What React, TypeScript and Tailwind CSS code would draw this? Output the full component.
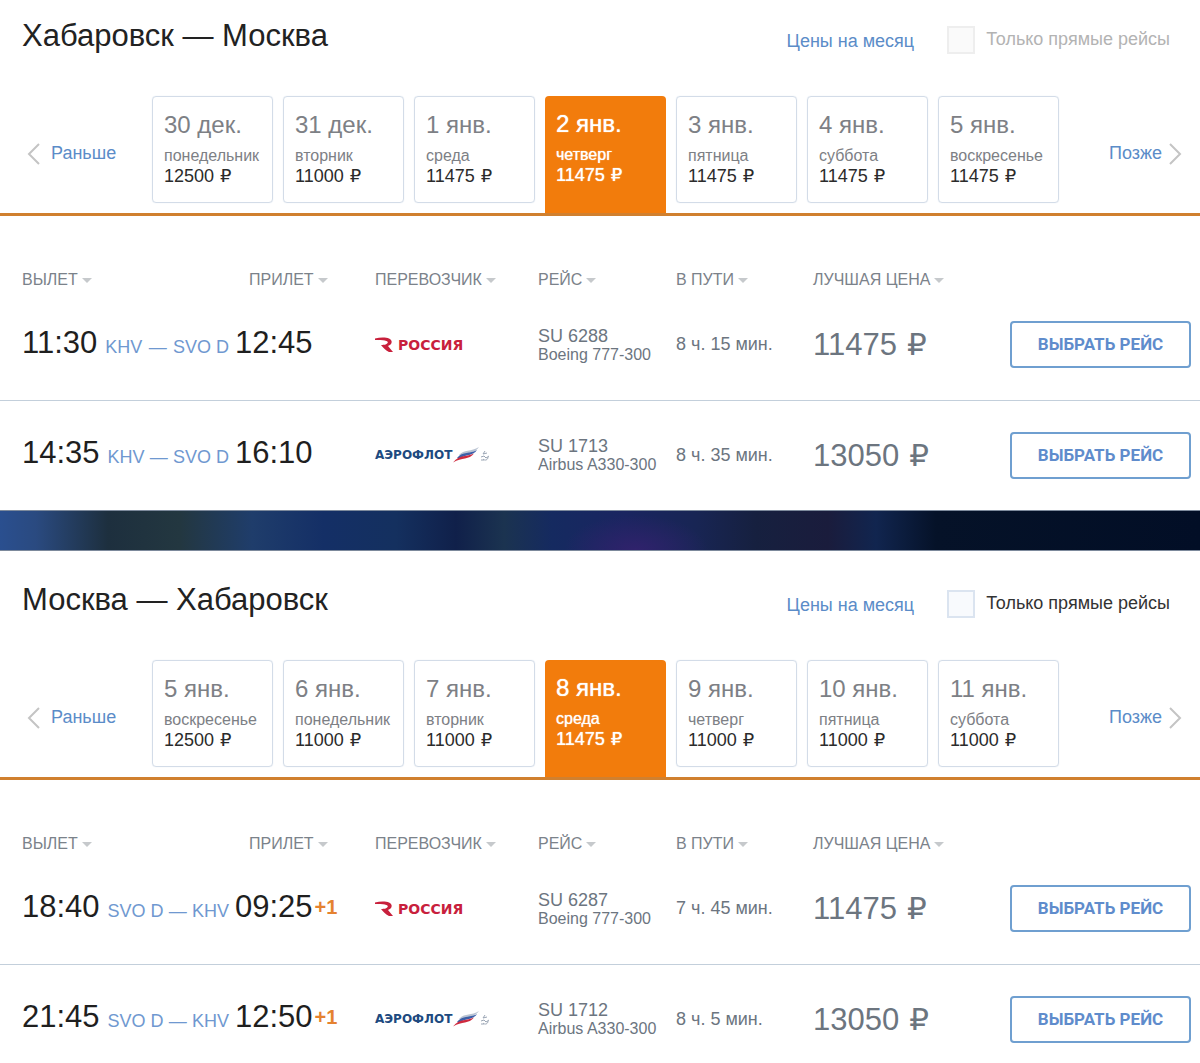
import { useState } from 'react';

type Carrier = 'rossiya' | 'aeroflot';

interface DayPrice {
  date: string;
  weekday: string;
  price: number;
}

interface Flight {
  depart: string;
  from: string;
  to: string;
  arrive: string;
  nextDay?: boolean;
  carrier: Carrier;
  number: string;
  plane: string;
  duration: string;
  price: number;
}

interface Direction {
  id: string;
  title: string;
  directOnlyDisabled?: boolean;
  days: DayPrice[];
  flights: Flight[];
}

const OUTBOUND: Direction = {
  id: 'outbound',
  title: 'Хабаровск — Москва',
  directOnlyDisabled: true,
  days: [
    { date: '30 дек.', weekday: 'понедельник', price: 12500 },
    { date: '31 дек.', weekday: 'вторник', price: 11000 },
    { date: '1 янв.', weekday: 'среда', price: 11475 },
    { date: '2 янв.', weekday: 'четверг', price: 11475 },
    { date: '3 янв.', weekday: 'пятница', price: 11475 },
    { date: '4 янв.', weekday: 'суббота', price: 11475 },
    { date: '5 янв.', weekday: 'воскресенье', price: 11475 },
  ],
  flights: [
    { depart: '11:30', from: 'KHV', to: 'SVO D', arrive: '12:45', carrier: 'rossiya', number: 'SU 6288', plane: 'Boeing 777-300', duration: '8 ч. 15 мин.', price: 11475 },
    { depart: '14:35', from: 'KHV', to: 'SVO D', arrive: '16:10', carrier: 'aeroflot', number: 'SU 1713', plane: 'Airbus A330-300', duration: '8 ч. 35 мин.', price: 13050 },
  ],
};

const INBOUND: Direction = {
  id: 'inbound',
  title: 'Москва — Хабаровск',
  days: [
    { date: '5 янв.', weekday: 'воскресенье', price: 12500 },
    { date: '6 янв.', weekday: 'понедельник', price: 11000 },
    { date: '7 янв.', weekday: 'вторник', price: 11000 },
    { date: '8 янв.', weekday: 'среда', price: 11475 },
    { date: '9 янв.', weekday: 'четверг', price: 11000 },
    { date: '10 янв.', weekday: 'пятница', price: 11000 },
    { date: '11 янв.', weekday: 'суббота', price: 11000 },
  ],
  flights: [
    { depart: '18:40', from: 'SVO D', to: 'KHV', arrive: '09:25', nextDay: true, carrier: 'rossiya', number: 'SU 6287', plane: 'Boeing 777-300', duration: '7 ч. 45 мин.', price: 11475 },
    { depart: '21:45', from: 'SVO D', to: 'KHV', arrive: '12:50', nextDay: true, carrier: 'aeroflot', number: 'SU 1712', plane: 'Airbus A330-300', duration: '8 ч. 5 мин.', price: 13050 },
  ],
};

const COLUMNS = [
  { label: 'ВЫЛЕТ', cell: 'w-[235px] pl-[22px]' },
  { label: 'ПРИЛЕТ', cell: 'w-[140px] pl-[14px]' },
  { label: 'ПЕРЕВОЗЧИК', cell: 'w-[163px]' },
  { label: 'РЕЙС', cell: 'w-[138px]' },
  { label: 'В ПУТИ', cell: 'w-[137px]' },
  { label: 'ЛУЧШАЯ ЦЕНА', cell: '' },
];

function RossiyaLogo() {
  return (
    <span className="flex items-center gap-1 text-[#c8203c]">
      <svg width="19" height="16" viewBox="0 0 19 16" fill="currentColor" aria-hidden="true">
        <path d="M0 1.500C5 .3 11 .3 14 1.500C18 3.200 17.500 7.500 13 9L18 15H14C11 13.500 8 10.500 6 8C9.500 8 12.500 7.200 12.800 5.500C13 3.500 9 2.900 0 2.900Z" />
      </svg>
      <span className="font-['DejaVu_Sans',sans-serif] text-[14px] leading-4 font-bold">РОССИЯ</span>
    </span>
  );
}

function AeroflotLogo() {
  return (
    <span className="flex items-center gap-px text-[#1d4a80]">
      <span className="font-['DejaVu_Sans',sans-serif] text-[12px] leading-4 font-bold">АЭРОФЛОТ</span>
      <svg width="38" height="18" viewBox="0 0 38 18" fill="none" aria-hidden="true">
        <path d="M6 9C11 3 18 6 26 1C22 7 15 6 8 10Z" fill="#b9c3d2" />
        <path d="M4 12C10 5 17 8 24 4C20 10 13 8 6 13Z" fill="#3c5fa8" />
        <path d="M0 16.500C7 8 14 11 21 7.500C16 14 9 11 0 16.500Z" fill="#cf2a3e" />
        <g stroke="#9aa5b4" strokeWidth="1">
          <path d="M32 5L30 8L34 7M28 11L31 10L33 12L36 10M30 13C32 15 35 14 35 11M28 14H31" />
        </g>
      </svg>
    </span>
  );
}

function Price({ value, className }: { value: number; className: string }) {
  return (
    <span className={`flex items-baseline whitespace-nowrap ${className}`}>
      {value}
      <span className="font-['DejaVu_Sans',sans-serif]">₽</span>
    </span>
  );
}

function DayTabs({ days }: { days: DayPrice[] }) {
  const [selected, setSelected] = useState(3);

  return (
    <div className="flex border-b-3 border-[#d0802f]">
      <button type="button" className="flex h-[107px] w-[152px] shrink-0 items-center gap-[10px] pt-2 pl-[27px] text-[18px] text-[#5b8cc8]">
        <svg width="14" height="22" viewBox="0 0 14 22" fill="none" stroke="#c4c4c4" strokeWidth="2" aria-hidden="true">
          <path d="M12 1L2 11L12 21" />
        </svg>
        Раньше
      </button>

      <div className="grid min-w-0 flex-1 grid-cols-7 gap-[10px]">
        {days.map((day, i) => (
          <button
            key={day.date}
            type="button"
            aria-pressed={i === selected}
            onClick={() => setSelected(i)}
            className={`flex min-w-0 flex-col overflow-hidden text-left ${
              i === selected
                ? 'rounded-t-sm bg-[#f27c0c] pt-[14px] pl-[11px] text-white text-shadow-[0_0_1px_#ffffff]'
                : 'mb-[10px] h-[107px] rounded-sm border border-[#d3dce8] pt-[14px] pl-[11px] text-[#7d8085] shadow-[0_0_1px_#d3dce8]'
            }`}
          >
            <span className="text-[24px] leading-[28px]">{day.date}</span>
            <span className="mt-[7px] text-[16px] leading-5 whitespace-nowrap">{day.weekday}</span>
            <Price value={day.price} className={`gap-[6px] text-[18px] leading-5 ${i === selected ? '' : 'text-[#2b2b2b]'}`} />
          </button>
        ))}
      </div>

      <button type="button" className="flex h-[107px] w-[141px] shrink-0 items-center justify-end gap-[6px] pt-2 pr-[18px] text-[18px] text-[#5b8cc8]">
        Позже
        <svg width="14" height="22" viewBox="0 0 14 22" fill="none" stroke="#c4c4c4" strokeWidth="2" aria-hidden="true">
          <path d="M2 1L12 11L2 21" />
        </svg>
      </button>
    </div>
  );
}

function FlightRow({ flight, last }: { flight: Flight; last: boolean }) {
  return (
    <tr className={`h-[110px] text-[#6c757f] ${last ? '' : 'border-b border-[#c3cfdb]'}`}>
      <td className="pb-1 pl-[22px]">
        <div className="flex items-baseline gap-2 pr-[6px]">
          <span className="text-[31px] leading-9 text-[#1f1f1f]">{flight.depart}</span>
          <a href="#route" className="flex flex-1 justify-between text-[18px] whitespace-nowrap text-[#6f98d0]">
            <span>{flight.from}</span>
            <span>—</span>
            <span>{flight.to}</span>
          </a>
        </div>
      </td>
      <td className="pb-1">
        <div className="flex gap-[2px] whitespace-nowrap">
          <span className="text-[31px] leading-9 text-[#1f1f1f]">{flight.arrive}</span>
          {flight.nextDay && <span className="text-[20px] leading-9 font-bold text-[#e58230]">+1</span>}
        </div>
      </td>
      <td>{flight.carrier === 'rossiya' ? <RossiyaLogo /> : <AeroflotLogo />}</td>
      <td className="whitespace-nowrap">
        <div className="text-[18px] leading-5">{flight.number}</div>
        <div className="text-[16px] leading-[18px]">{flight.plane}</div>
      </td>
      <td className="text-[18px] whitespace-nowrap">{flight.duration}</td>
      <td>
        <Price value={flight.price} className="gap-[10px] text-[31px] leading-9" />
      </td>
      <td className="pr-[9px]">
        <button type="button" className="h-[47px] w-full rounded border-2 border-[#6f9fd0] font-['Roboto',sans-serif] text-[17px] font-bold text-[#5f8ccc]">
          ВЫБРАТЬ РЕЙС
        </button>
      </td>
    </tr>
  );
}

function DirectionBlock({ direction }: { direction: Direction }) {
  const checkboxId = `direct-${direction.id}`;

  return (
    <section className="bg-white">
      <header className="mb-[13px] flex h-[83px] items-center pr-[30px] pl-[22px]">
        <h2 className="flex-1 pb-3 text-[31px] leading-9 text-[#222]">{direction.title}</h2>
        <a href="#month" className="mr-[33px] text-[18px] text-[#5b8cc8]">Цены на месяц</a>
        <span className={`flex items-center gap-[11px] pb-1 ${direction.directOnlyDisabled ? 'text-[#b3b3b3]' : 'text-[#333]'}`}>
          <input
            id={checkboxId}
            type="checkbox"
            disabled={direction.directOnlyDisabled}
            className="size-7 appearance-none border-2 border-[#dbe4f0] bg-[#f8fafd] checked:bg-[#5b8cc8] disabled:border-[#eeeeee] disabled:bg-[#fafafa]"
          />
          <label htmlFor={checkboxId} className="text-[18px]">Только прямые рейсы</label>
        </span>
      </header>

      <DayTabs days={direction.days} />

      <table className="mt-[54px] w-full table-fixed border-collapse text-left">
        <thead>
          <tr className="h-5">
            {COLUMNS.map(col => (
              <th key={col.label} scope="col" className={`p-0 font-normal ${col.cell}`}>
                <button type="button" className="flex items-center gap-1 text-[16px] leading-5 whitespace-nowrap text-[#7b828a]">
                  {col.label}
                  <svg width="10" height="5" viewBox="0 0 10 5" fill="#c6c9cc" aria-hidden="true">
                    <path d="M0 0H10L5 5Z" />
                  </svg>
                </button>
              </th>
            ))}
            <td className="w-[190px]" />
          </tr>
        </thead>
        <tbody>
          {direction.flights.map((flight, i) => (
            <FlightRow key={flight.number} flight={flight} last={i === direction.flights.length - 1} />
          ))}
        </tbody>
      </table>
    </section>
  );
}

export default function App() {
  return (
    <main className="bg-white font-['Liberation_Sans',Arial,sans-serif]">
      <DirectionBlock direction={OUTBOUND} />
      {/* night sky strip between the two directions */}
      <div className="mb-[13px] h-[41px] border-y border-[#7d8a9c] bg-[radial-gradient(ellipse_6%_90%_at_53%_100%,#30226c,transparent),linear-gradient(90deg,#2a4f8f_0%,#2a4a80_3%,#1d2f3e_9%,#233740_15%,#1f3d6b_21%,#142f66_27%,#14305f_33%,#10204a_38%,#1b3350_42%,#152a60_46%,#1a2560_52%,#182554_58%,#16203f_63%,#1a1c3c_69%,#11254f_73%,#051228_78%,#020e26_100%)]" />
      <DirectionBlock direction={INBOUND} />
    </main>
  );
}
